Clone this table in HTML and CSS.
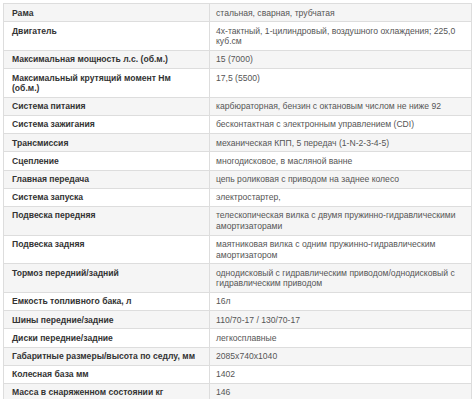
FILE: index.html
```html
<!DOCTYPE html>
<html lang="ru">
<head>
<meta charset="utf-8">
<title>Технические характеристики</title>
<link rel="stylesheet" href="styles.css">
</head>
<body>
<table class="specs">
  <tbody>
    <tr><th>Рама</th><td>стальная, сварная, трубчатая</td></tr>
    <tr><th>Двигатель</th><td>4х-тактный, 1-цилиндровый, воздушного охлаждения; 225,0 куб.см</td></tr>
    <tr><th>Максимальная мощность л.с. (об.м.)</th><td>15 (7000)</td></tr>
    <tr><th>Максимальный крутящий момент Нм<br>(об.м.)</th><td>17,5 (5500)</td></tr>
    <tr><th>Система питания</th><td>карбюраторная, бензин с октановым числом не ниже 92</td></tr>
    <tr><th>Система зажигания</th><td>бесконтактная с электронным управлением (CDI)</td></tr>
    <tr><th>Трансмиссия</th><td>механическая КПП, 5 передач (1-N-2-3-4-5)</td></tr>
    <tr><th>Сцепление</th><td>многодисковое, в масляной ванне</td></tr>
    <tr><th>Главная передача</th><td>цепь роликовая с приводом на заднее колесо</td></tr>
    <tr><th>Система запуска</th><td>электростартер,</td></tr>
    <tr><th>Подвеска передняя</th><td>телескопическая вилка с двумя пружинно-гидравлическими амортизаторами</td></tr>
    <tr><th>Подвеска задняя</th><td>маятниковая вилка с одним пружинно-гидравлическим амортизатором</td></tr>
    <tr><th>Тормоз передний/задний</th><td>однодисковый с гидравлическим приводом/однодисковый с гидравлическим приводом</td></tr>
    <tr><th>Емкость топливного бака, л</th><td>16л</td></tr>
    <tr><th>Шины передние/задние</th><td>110/70-17 / 130/70-17</td></tr>
    <tr><th>Диски передние/задние</th><td>легкосплавные</td></tr>
    <tr><th>Габаритные размеры/высота по седлу, мм</th><td>2085х740х1040</td></tr>
    <tr><th>Колесная база мм</th><td>1402</td></tr>
    <tr><th>Масса в снаряженном состоянии кг</th><td>146</td></tr>
  </tbody>
</table>
</body>
</html>
```

FILE: styles.css
```css
html, body {
  margin: 0;
  padding: 0;
  background: #ffffff;
}

body {
  padding: 3px 2px 0 3px;
  font-family: "Liberation Sans", Arial, sans-serif;
  font-size: 8.6px;
  line-height: 10.5px;
}

.specs {
  width: 469px;
  border-collapse: collapse;
  table-layout: fixed;
}

.specs th,
.specs td {
  border: 1px solid #dddddd;
  padding: 3.5px 6px 3.2px 8px;
  vertical-align: top;
  text-align: left;
}

.specs th {
  width: 191px;
  font-weight: bold;
  color: #333333;
}

.specs td {
  color: #555555;
  padding-left: 6px;
}

.specs tr:nth-child(odd) {
  background: #f5f5f5;
}
```
